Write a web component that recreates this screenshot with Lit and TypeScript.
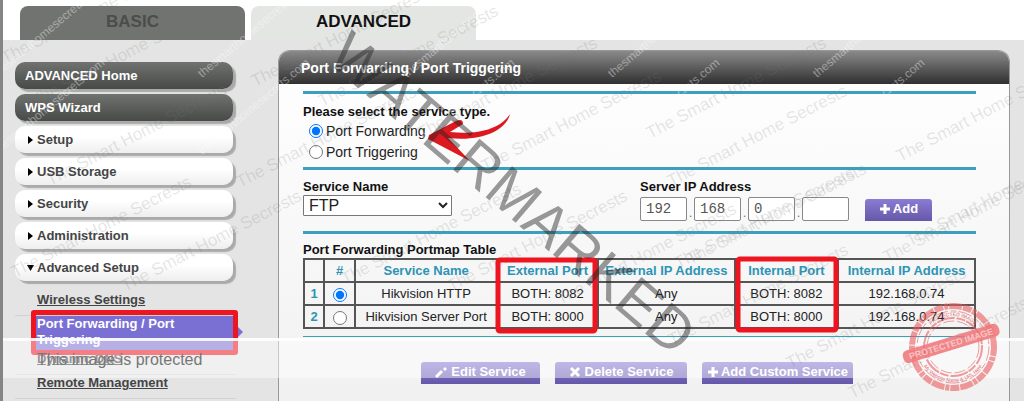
import { LitElement, html, svg, css } from "lit";
import { customElement } from "lit/decorators.js";

const MENU = ["Setup", "USB Storage", "Security", "Administration"];
const HEADS = ["", "#", "Service Name", "External Port", "External IP Address", "Internal Port", "Internal IP Address"];
const ROWS = [
  ["Hikvision HTTP", "BOTH: 8082", "Any", "BOTH: 8082", "192.168.0.74"],
  ["Hikvision Server Port", "BOTH: 8000", "Any", "BOTH: 8000", "192.168.0.74"],
];
const OCTETS = ["192", "168", "0", ""];
const GREY_MARKS = [
  [650, 139], [671, 187], [900, 162], [421, 139], [485, 172], [678, 269], [910, 247], [451, 292],
  [322, 107], [255, 87], [5, 64], [35, 107], [240, 188], [50, 186], [15, 278], [125, 292],
  [345, 285], [560, 305], [690, 265], [672, 346], [887, 263], [790, 369], [852, 399],
];
const WHITE_MARKS = [-3, 202, 407, 612, 817].flatMap((x) => [78, 155].map((y) => [x, y]));

@customElement("app-root")
export class AppRoot extends LitElement {
  static styles = css`
    :host { display: block; position: relative; overflow: hidden; background: #e4e4e4; border-left: 3px solid #858585;
      font-family: "Liberation Sans", Arial, sans-serif; font-size: 13px; line-height: 16px; color: #222; }
    * { box-sizing: border-box; }
    .tabs { display: flex; gap: 6px; height: 40px; padding: 6px 0 0 17px; background: #fff; }
    .tab { width: 225px; border: 0; border-radius: 8px 8px 0 0; background: #70736f; color: #4b4d4a; font: bold 17px/30px "Liberation Sans", Arial, sans-serif; padding: 0 0 3px; }
    .tab.on { background: #e4e6e4; color: #111; }
    .page { display: grid; grid-template-columns: 221px minmax(0, 1fr); gap: 42px; height: 361px; padding: 10px 14px 0 12px; }
    nav { padding-top: 12px; }
    .menu { display: flex; flex-direction: column; gap: 5px; }
    .item { height: 27px; margin-right: 3px; padding: 0 12px; border: 0; border-radius: 10px; text-align: left; display: flex; align-items: center; gap: 3px;
      font: bold 13px/16px "Liberation Sans", Arial, sans-serif; color: #444; background: linear-gradient(#fff 40%, #eee); box-shadow: 3px 3px 1px #aaa; }
    .item.dark { color: #fff; padding: 0 10px; background: linear-gradient(#707270, #484a48); }
    .item svg { width: 7px; height: 8px; }
    .sub { list-style: none; margin: 0; padding: 11px 0 0; }
    .sub li { padding: 0 0 7px 22px; border-bottom: 1px solid #d2d2d2; }
    .sub a { color: #444; font-weight: bold; }
    .sub .cur { position: relative; background: linear-gradient(#7a70d4, #7a70d4) 20px 0 / 198px 100% no-repeat; padding: 0 20px 3px 22px; border: 0; }
    .cur a { color: #fff; text-decoration: none; }
    .cur::after { content: ""; position: absolute; right: -7px; top: 8px; border: 8px solid transparent; border-left-color: #7a70d4; border-right: 0; }
    .cur::before { content: ""; position: absolute; left: 16px; right: -2px; top: -6px; bottom: -4px; border: 5px solid #ec1520; border-radius: 3px; z-index: 1; }
    .panel { border: 1px solid #999; border-bottom: 0; border-radius: 12px 12px 0 0; background: linear-gradient(#fff, #f1f1f1); overflow: hidden; }
    h1 { margin: 0; height: 33px; padding-left: 22px; font-size: 14px; line-height: 34px; color: #fff; background: linear-gradient(#8a8a8a, #303030); }
    .body { padding: 7px 33px 0 24px; }
    section { border-top: 3px solid #3ca0bd; }
    .types { height: 76px; padding-top: 10px; }
    .types strong, .lab { display: block; font-weight: bold; color: #111; }
    .types label { display: flex; align-items: center; gap: 3px; height: 21px; padding-left: 6px; font-size: 14px; }
    input[type="radio"] { width: 14px; height: 14px; margin: 0; }
    .add { height: 64px; padding-top: 9px; display: grid; grid-template-columns: 337px auto 1fr; }
    select { width: 149px; height: 21px; border: 1px solid #777; border-radius: 1px; background: #fff; font: 16px/18px "Liberation Sans", Arial, sans-serif; color: #222; padding: 0 0 0 1px; display: block; }
    fieldset { border: 0; margin: 0; padding: 0; }
    legend { padding: 0; }
    .ip { display: flex; align-items: flex-end; color: #777; padding-top: 2px; }
    .ip span { width: 7px; text-align: center; }
    .ip input { width: 47px; height: 24px; border: 1px solid #888; border-radius: 2px; padding: 0 5px; background: #fff; font: 14px/20px "Liberation Mono", monospace; color: #555; }
    .btn { display: flex; align-items: center; justify-content: center; gap: 4px; border: 0; border-radius: 3px 3px 0 0; padding: 0 0 2px; height: 22px; color: #fff;
      background: linear-gradient(#8a7cd4, #6558a8); font: bold 13px/16px "Liberation Sans", Arial, sans-serif; }
    .btn svg { width: 12px; height: 12px; fill: none; stroke: #fff; stroke-width: 3; }
    .add .btn { width: 67px; margin: 20px 0 0 16px; gap: 2px; }
    .map { padding-top: 8px; }
    table { width: 100%; border-collapse: collapse; table-layout: fixed; }
    caption { text-align: left; font-weight: bold; color: #111; }
    th, td { border: 2px solid #555; padding: 0; text-align: center; height: 23px; white-space: nowrap; }
    th { color: #2d94b5; }
    .c1 { width: 3%; } .c2 { width: 4.6%; } .c3 { width: 21.2%; } .c4 { width: 15%; } .c5 { width: 20.4%; } .c6 { width: 15.4%; }
    td input[type="radio"] { display: block; margin: 2px auto 0; }
    .acts { display: flex; gap: 15px; margin-top: 7px; padding: 25px 0 0 118px; border-top: 1px solid #3ca0bd; }
    .acts .btn { width: 119px; }
    .acts .btn.w2 { width: 132px; }
    .acts .btn.w3 { width: 151px; gap: 2px; }
    .over { position: absolute; left: -3px; top: 0; width: 1024px; height: 401px; pointer-events: none; z-index: 3; }
    .notice { position: absolute; left: -3px; right: 0; top: 338px; height: 40px; border-top: 3px solid #ffffffdd; background: #ffffff73;
      padding: 10px 0 0 37px; font-size: 16px; line-height: 18px; color: #777; z-index: 2; }
  `;

  icon(d: string) { return html`<svg viewBox="0 0 12 12" aria-hidden="true"><path d=${d}></path></svg>`; }

  render() {
    return html`
      <header class="tabs"><button class="tab">BASIC</button><button class="tab on">ADVANCED</button></header>
      <div class="page">
        <nav>
          <div class="menu">
            <button class="item dark">ADVANCED Home</button><button class="item dark">WPS Wizard</button>
            ${MENU.map((m) => html`<button class="item"><svg viewBox="0 0 7 8"><path d="M1 0L6 4L1 8Z"/></svg>${m}</button>`)}
            <button class="item"><svg viewBox="0 0 7 8"><path d="M0 1H7L3.5 7Z"/></svg>Advanced Setup</button>
          </div>
          <ul class="sub">
            <li><a href="#wireless">Wireless Settings</a></li>
            <li class="cur"><a href="#ports">Port Forwarding / Port Triggering</a></li>
            <li><a href="#dns">Dynamic DNS</a></li>
            <li><a href="#remote">Remote Management</a></li>
          </ul>
        </nav>
        <main class="panel">
          <h1>Port Forwarding / Port Triggering</h1>
          <div class="body">
            <section class="types">
              <strong>Please select the service type.</strong>
              <label><input type="radio" name="type" checked />Port Forwarding</label>
              <label><input type="radio" name="type" />Port Triggering</label>
            </section>
            <section class="add">
              <div><label class="lab" for="svc">Service Name</label><select id="svc"><option>FTP</option></select></div>
              <fieldset><legend class="lab">Server IP Address</legend>
                <div class="ip">${OCTETS.map((o, i) => html`${i ? html`<span>.</span>` : ""}<input aria-label="Octet ${i + 1}" .value=${o} />`)}</div>
              </fieldset>
              <button class="btn">${this.icon("M6 1V11M1 6H11")}Add</button>
            </section>
            <section class="map">
              <table>
                <caption>Port Forwarding Portmap Table</caption>
                <colgroup>${[1, 2, 3, 4, 5, 6, 7].map((n) => html`<col class="c${n}" />`)}</colgroup>
                <thead><tr>${HEADS.map((h) => html`<th>${h}</th>`)}</tr></thead>
                <tbody>${ROWS.map((r, i) => html`<tr><th>${i + 1}</th><td><input type="radio" name="row" aria-label=${r[0]} ?checked=${i === 0} /></td>${r.map((c) => html`<td>${c}</td>`)}</tr>`)}</tbody>
              </table>
            </section>
            <div class="acts">
              <button class="btn">${this.icon("M1 11L7 5M9 4L11 2")}Edit Service</button>
              <button class="btn w2">${this.icon("M2 2L10 10M10 2L2 10")}Delete Service</button>
              <button class="btn w3">${this.icon("M6 1V11M1 6H11")}Add Custom Service</button>
            </div>
          </div>
        </main>
      </div>
      <svg class="over" viewBox="0 0 1024 401">
        <g fill="#777" fill-opacity=".19" font-size="17">
          ${GREY_MARKS.map(([x, y]) => svg`<text transform="translate(${x} ${y}) rotate(-27.5)">The Smart Home Secrests</text>`)}
        </g>
        <g fill="#fff" fill-opacity=".4" font-size="12">
          ${WHITE_MARKS.map(([x, y]) => svg`<text transform="translate(${x} ${y}) rotate(-40)">thesmarthomesecrets.com</text>`)}
        </g>
        <g fill="none" stroke="#ec1520" stroke-width="5"><rect x="498" y="260" width="97" height="71" rx="2"/><rect x="738" y="259" width="98" height="71" rx="2"/></g>
        <path fill="#dc1820" d="M429 135L456 121Q463 118 463 124L450 132C475 135 500 130 510 114C506 131 480 142 448 138L470 161L428 139Z"/>
        <text fill="#222" fill-opacity=".45" font-size="59" transform="translate(325 60) rotate(40.5)">WATERMARKED</text>
        <g fill="none" stroke="#ea5a5e" stroke-opacity=".6">
          <circle cx="953" cy="347" r="41" stroke-width="6" stroke-dasharray="9 1 4 1 13 1"/>
          <circle cx="953" cy="347" r="36" stroke-dasharray="14 3 6 2"/>
          <circle cx="953" cy="347" r="29" stroke-width="2" stroke-dasharray="18 2 9 1"/>
          <circle cx="953" cy="347" r="26" stroke-dasharray="11 3"/>
        </g>
        <path id="arc-top" fill="none" d="M922 347A31 31 0 0 1 984 347"/>
        <path id="arc-low" fill="none" d="M918 347A35 35 0 0 0 988 347"/>
        <g fill="#e0656a" font-size="5" text-anchor="middle">
          <text><textPath href="#arc-top" startOffset="50%">PROTECTED IMAGE</textPath></text>
          <text><textPath href="#arc-low" startOffset="50%">My Website Name &amp; URL Here</textPath></text>
        </g>
        <g transform="translate(951 343) rotate(-17)">
          <rect x="-50" y="-6" width="100" height="13" rx="5" fill="#ee7478" fill-opacity=".85"/>
          <text y="4" fill="#f9c4c4" font-size="9" font-weight="bold" text-anchor="middle">PROTECTED IMAGE</text>
        </g>
      </svg>
      <div class="notice">This image is protected</div>
    `;
  }
}
